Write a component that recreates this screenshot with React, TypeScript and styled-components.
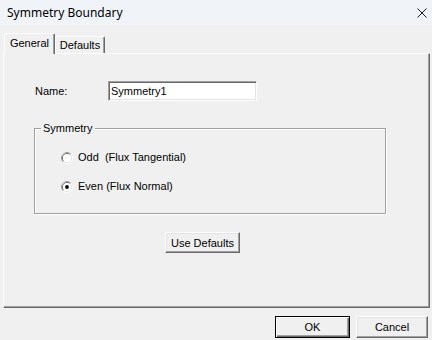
import React from "react";
import styled, { createGlobalStyle, css } from "styled-components";

const GlobalStyle = createGlobalStyle`
  html, body { margin: 0; padding: 0; background: #f0f0f0; }
  body {
    font-family: "Liberation Sans", Arial, sans-serif;
    font-size: 11px;
    color: #000;
  }
  * { box-sizing: border-box; }
`;

const Window = styled.div`
  width: 432px;
  height: 340px;
  display: flex;
  flex-direction: column;
  background: #f0f0f0;
  overflow: hidden;
`;

const TitleBar = styled.div`
  height: 25px;
  flex: none;
  display: flex;
  align-items: center;
  justify-content: space-between;
  padding: 0 5px 0 7px;
  background: #f0f4f9;
`;

const Title = styled.span`
  font-family: "Noto Sans", "Open Sans", sans-serif;
  font-size: 12px;
  line-height: 16px;
  color: #000;
`;

const CloseIcon = styled.svg`
  display: block;
  width: 10px;
  height: 10px;
`;

const Body = styled.div`
  flex: 1;
  display: flex;
  flex-direction: column;
  padding: 8px 2px 0 3px;
`;

const TabStrip = styled.div`
  height: 20px;
  flex: none;
  display: flex;
  align-items: flex-end;
  padding-left: 1px;
`;

const Tab = styled.div<{ $active?: boolean; $width: number }>`
  width: ${(p) => p.$width}px;
  display: flex;
  align-items: center;
  justify-content: center;
  line-height: 13px;
  background: #f0f0f0;
  border-top: 1px solid #fff;
  border-left: 1px solid #fff;
  border-right: 1px solid #696969;
  box-shadow: inset -1px 0 0 #a0a0a0;
  border-radius: 2px 2px 0 0;
  ${(p) =>
    p.$active
      ? css`
          height: 21px;
          margin-bottom: -1px;
          position: relative;
          z-index: 1;
          padding-bottom: 1px;
        `
      : css`
          height: 17px;
        `}
`;

const Panel = styled.div`
  flex: 1;
  display: flex;
  flex-direction: column;
  align-items: flex-start;
  padding: 27px 0 0 30px;
  border-top: 1px solid #fff;
  border-left: 1px solid #fff;
  border-right: 1px solid #696969;
  border-bottom: 1px solid #696969;
  box-shadow: inset -1px -1px 0 #a0a0a0;
`;

const FieldRow = styled.div`
  display: flex;
  align-items: center;
  height: 20px;
`;

const FieldLabel = styled.label`
  width: 74px;
  padding-left: 1px;
  line-height: 13px;
`;

const TextBox = styled.input`
  width: 149px;
  height: 20px;
  margin: 0;
  padding: 0 0 0 2px;
  font-family: "Liberation Sans", Arial, sans-serif;
  font-size: 11px;
  color: #000;
  background: #fff;
  border: 1px solid;
  border-color: #a0a0a0 #fff #fff #a0a0a0;
  box-shadow: inset 1px 1px 0 #696969, inset -1px -1px 0 #e3e3e3;
  outline: none;
`;

const Group = styled.fieldset`
  width: 352px;
  height: 92px;
  margin: 21px 0 0 0;
  padding: 0;
  border: 1px solid #a0a0a0;
  box-shadow: inset 1px 1px 0 #fff, 1px 1px 0 #fff;
  min-inline-size: 0;
`;

const Legend = styled.legend`
  margin-left: 6px;
  padding: 0 2px;
  line-height: 13px;
`;

const RadioList = styled.div`
  display: flex;
  flex-direction: column;
  gap: 16px;
  padding: 16px 0 0 26px;
`;

const RadioRow = styled.label`
  display: flex;
  align-items: center;
  gap: 5px;
  height: 13px;
  line-height: 13px;
  white-space: pre;
`;

const RadioSvg = styled.svg`
  display: block;
  width: 12px;
  height: 12px;
  flex: none;
`;

const Button = styled.button<{ $width?: number; $default?: boolean }>`
  width: ${(p) => p.$width ?? 75}px;
  height: 21px;
  margin: 0;
  padding: 0;
  font-family: "Liberation Sans", Arial, sans-serif;
  font-size: 11px;
  color: #000;
  background: #f0f0f0;
  border: 1px solid;
  border-color: #fff #696969 #696969 #fff;
  box-shadow: inset -1px -1px 0 #a0a0a0, inset 1px 1px 0 #e3e3e3;
  ${(p) =>
    p.$default &&
    css`
      border-color: #000;
      box-shadow: inset 1px 1px 0 #fff, inset -1px -1px 0 #696969,
        inset -2px -2px 0 #a0a0a0;
    `}
`;

const DefaultsButton = styled(Button)`
  margin: 18px 0 0 131px;
`;

const Footer = styled.div`
  flex: none;
  display: flex;
  justify-content: flex-end;
  gap: 6px;
  padding: 8px 4px 2px 0;
`;

const FooterButton = styled(Button)`
  height: 22px;
`;

function Radio({ checked }: { checked?: boolean }) {
  return (
    <RadioSvg viewBox="0 0 12 12">
      <path d="M2.11 9.89 A5.5 5.5 0 0 1 9.89 2.11" fill="none" stroke="#a0a0a0" />
      <path d="M9.89 2.11 A5.5 5.5 0 0 1 2.11 9.89" fill="none" stroke="#ffffff" />
      <path d="M2.82 9.18 A4.5 4.5 0 0 1 9.18 2.82" fill="none" stroke="#696969" />
      <path d="M9.18 2.82 A4.5 4.5 0 0 1 2.82 9.18" fill="none" stroke="#e3e3e3" />
      <circle cx="6" cy="6" r="4" fill="#ffffff" />
      {checked && <circle cx="6" cy="6" r="1.9" fill="#000" />}
    </RadioSvg>
  );
}

export default function App() {
  return (
    <>
      <GlobalStyle />
      <Window>
        <TitleBar>
          <Title>Symmetry Boundary</Title>
          <CloseIcon viewBox="0 0 10 10">
            <path d="M0.5 0.5 L9.5 9.5 M9.5 0.5 L0.5 9.5" stroke="#1a1a1a" strokeWidth="1" />
          </CloseIcon>
        </TitleBar>
        <Body>
          <TabStrip>
            <Tab $active $width={51}>General</Tab>
            <Tab $width={50}>Defaults</Tab>
          </TabStrip>
          <Panel>
            <FieldRow>
              <FieldLabel>Name:</FieldLabel>
              <TextBox defaultValue="Symmetry1" />
            </FieldRow>
            <Group>
              <Legend>Symmetry</Legend>
              <RadioList>
                <RadioRow>
                  <Radio />
                  {"Odd  (Flux Tangential)"}
                </RadioRow>
                <RadioRow>
                  <Radio checked />
                  {"Even (Flux Normal)"}
                </RadioRow>
              </RadioList>
            </Group>
            <DefaultsButton>Use Defaults</DefaultsButton>
          </Panel>
        </Body>
        <Footer>
          <FooterButton $default>OK</FooterButton>
          <FooterButton $width={72}>Cancel</FooterButton>
        </Footer>
      </Window>
    </>
  );
}
